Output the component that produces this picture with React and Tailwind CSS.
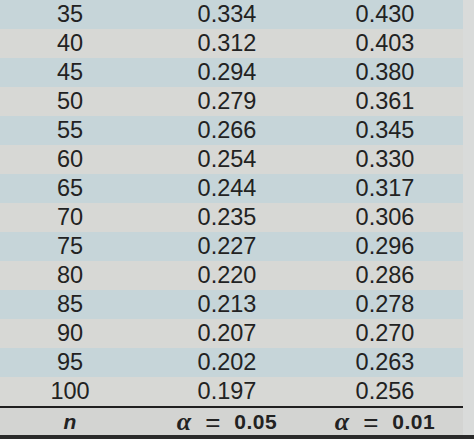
const rows = [
  ["35", "0.334", "0.430"],
  ["40", "0.312", "0.403"],
  ["45", "0.294", "0.380"],
  ["50", "0.279", "0.361"],
  ["55", "0.266", "0.345"],
  ["60", "0.254", "0.330"],
  ["65", "0.244", "0.317"],
  ["70", "0.235", "0.306"],
  ["75", "0.227", "0.296"],
  ["80", "0.220", "0.286"],
  ["85", "0.213", "0.278"],
  ["90", "0.207", "0.270"],
  ["95", "0.202", "0.263"],
  ["100", "0.197", "0.256"],
];

const Alpha = ({ value }) => (
  <span className="flex items-center gap-[14px]">
    <span className="font-['Liberation_Serif',serif] italic text-[26px] font-bold">α</span>
    <span className="text-[26px]">=</span>
    <span className="font-bold text-[21px] tracking-[0.5px]">{value}</span>
  </span>
);

const App = () => {
  return (
    <div className="w-[474px] h-[439px] bg-[#d9dbda] flex flex-col overflow-hidden font-['Liberation_Sans',Arial,sans-serif] text-[#222]">
      <div className="w-[463px]">
        {rows.map((r, i) => (
          <div
            key={r[0]}
            className={`grid grid-cols-[140px_174px_149px] h-[29px] items-center text-[23.5px] leading-none ${i % 2 === 0 ? 'bg-[#c6d5d9]' : 'bg-[#d7d8d5]'}`}
          >
            <span className="text-center">{r[0]}</span>
            <span className="text-center">{r[1]}</span>
            <span className="text-center pr-[7px]">{r[2]}</span>
          </div>
        ))}
        <div className="h-[2px] bg-[#1f1f1f]"></div>
        <div className="grid grid-cols-[140px_174px_149px] h-[27px] items-center bg-[#d3d4d2] leading-none">
          <span className="text-center italic font-bold text-[21px]">n</span>
          <span className="flex justify-center"><Alpha value="0.05" /></span>
          <span className="flex justify-center pr-[7px]"><Alpha value="0.01" /></span>
        </div>
      </div>
      <div className="h-[4px] bg-[#2a2a2a]"></div>
    </div>
  );
};

export default App;
